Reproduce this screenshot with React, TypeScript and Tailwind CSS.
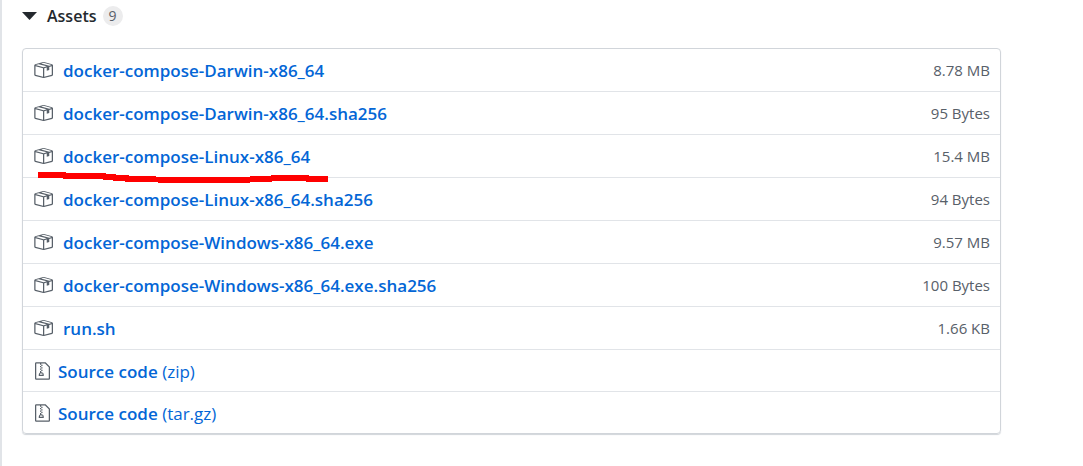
import clsx from "clsx";

const assets = [
  { name: "docker-compose-Darwin-x86_64", size: "8.78 MB" },
  { name: "docker-compose-Darwin-x86_64.sha256", size: "95 Bytes" },
  { name: "docker-compose-Linux-x86_64", size: "15.4 MB", marked: true },
  { name: "docker-compose-Linux-x86_64.sha256", size: "94 Bytes" },
  { name: "docker-compose-Windows-x86_64.exe", size: "9.57 MB" },
  { name: "docker-compose-Windows-x86_64.exe.sha256", size: "100 Bytes" },
  { name: "run.sh", size: "1.66 KB" },
];

const sources = ["zip", "tar.gz"];

function PackageIcon() {
  return (
    <svg
      viewBox="0 0 16 16"
      className="h-5 w-5 shrink-0 fill-[#586069]"
      aria-hidden="true"
    >
      <path
        fillRule="evenodd"
        d="M1 4.27v7.47c0 .45.3.84.75.97l6.5 1.73c.16.05.34.05.5 0l6.5-1.73c.45-.13.75-.52.75-.97V4.27c0-.45-.3-.84-.75-.97l-6.5-1.74a1.4 1.4 0 0 0-.5 0L1.75 3.3c-.45.13-.75.52-.75.97zm7 9.09l-6-1.59V5l6 1.61v6.75zM2 4l2.5-.67L11 5.06l-2.5.67L2 4zm13 7.77l-6 1.59V6.61l2-.55V8.5l2-.53V5.53L15 5v6.77zm-2-7.24L6.5 2.8l2-.53L15 4l-2 .53z"
      />
    </svg>
  );
}

function ZipIcon() {
  return (
    <svg
      viewBox="0 0 12 16"
      className="ml-0.5 h-5 w-[15px] shrink-0 fill-[#586069]"
      aria-hidden="true"
    >
      <path
        fillRule="evenodd"
        d="M8.5 1H1a1 1 0 0 0-1 1v12a1 1 0 0 0 1 1h10a1 1 0 0 0 1-1V4.5L8.5 1zM11 14H1V2h3v1h1V2h3l3 3v9zM5 4V3h1v1H5zM4 4h1v1H4V4zm1 2V5h1v1H5zM4 6h1v1H4V6zm1 2V7h1v1H5zM4 9.28A2 2 0 0 0 3 11v1h4v-1a2 2 0 0 0-2-2V8H4v1.28zM6 10v1H4v-1h2z"
      />
    </svg>
  );
}

// hand-drawn marker line under a row
function Marker() {
  return (
    <svg
      viewBox="0 0 290 12"
      className="pointer-events-none absolute -bottom-1.5 left-[15px] z-10 h-3 w-[290px] fill-[#ff0000]"
      aria-hidden="true"
    >
      <path d="M0 1h28v1h40v1h10v1h13v1h27v1h94v-1h21v-1h38v1h19v6h-22v-1h-34v1h-22v1h-92v-1h-33v-1h-12v-1h-10v-1H25V7H0z" />
    </svg>
  );
}

export default function App() {
  return (
    <div className="min-h-screen border-l-2 border-[#e1e4e8] bg-white pr-[82px] pl-5 font-['Open_Sans','Noto_Sans',sans-serif] text-base text-[#24292e]">
      <details open>
        <summary className="flex h-8 cursor-pointer list-none items-center">
          <svg
            viewBox="0 0 15 8"
            className="mr-2.5 h-2 w-[15px] fill-[#24292e]"
            aria-hidden="true"
          >
            <path d="M0 0h15L7.5 8z" />
          </svg>
          <span className="font-semibold">Assets</span>
          <span className="ml-1.5 flex h-5 w-5 items-center justify-center rounded-full bg-[#ececed] text-sm text-[#586069]">
            9
          </span>
        </summary>
        <ul className="mt-4 rounded border border-[#d1d5da] shadow-[0_1px_1px_#d1d5da]">
          {assets.map(({ name, size, marked }, index) => (
            <li
              key={name}
              className={clsx(
                "relative flex items-center justify-between px-2.5",
                index > 0 ? "h-[43px] border-t border-[#e1e4e8]" : "h-[42px]"
              )}
            >
              <a
                href="#"
                className="flex items-center gap-2.5 text-[17px] font-semibold text-[#0366d6] hover:underline"
              >
                <PackageIcon />
                <span className="pt-0.5">{name}</span>
              </a>
              <small className="text-[15px] text-[#586069]">{size}</small>
              {marked && <Marker />}
            </li>
          ))}
          {sources.map((type) => (
            <li
              key={type}
              className="flex h-[42px] items-center border-t border-[#e1e4e8] px-2.5"
            >
              <a
                href="#"
                className="flex items-center gap-2 text-[17px] text-[#0366d6] hover:underline"
              >
                <ZipIcon />
                <span className="pt-0.5">
                  <strong className="font-semibold">Source code</strong>{" "}
                  ({type})
                </span>
              </a>
            </li>
          ))}
        </ul>
      </details>
    </div>
  );
}
